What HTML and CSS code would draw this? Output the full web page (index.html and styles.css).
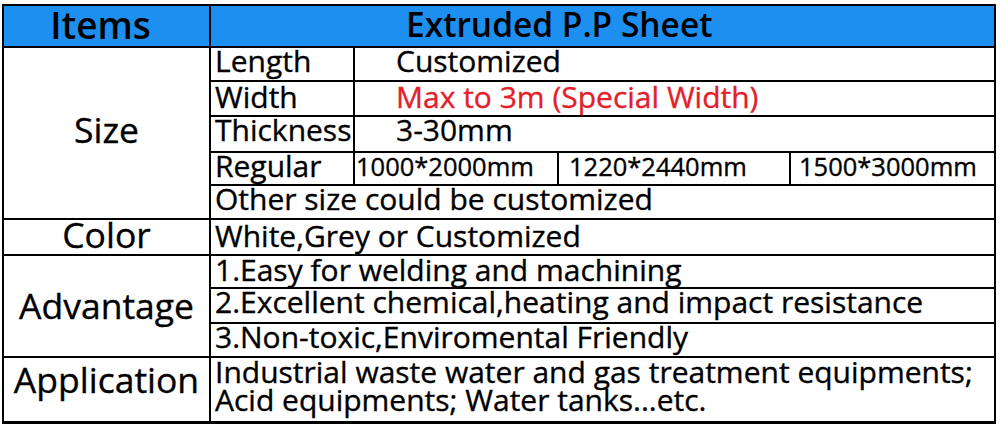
FILE: index.html
```html
<!DOCTYPE html>
<html lang="en">
<head>
<meta charset="utf-8">
<title>Extruded P.P Sheet</title>
<link rel="stylesheet" href="styles.css">
</head>
<body>
<div class="spec">
  <div class="cell head head-items">Items</div>
  <div class="cell head head-title span4">Extruded P.P Sheet</div>

  <div class="cell group group-size rows5">Size</div>
  <div class="cell label">Length</div>
  <div class="cell value span3">Customized</div>
  <div class="cell label drop2">Width</div>
  <div class="cell value span3 red drop2">Max to 3m (Special Width)</div>
  <div class="cell label">Thickness</div>
  <div class="cell value span3">3-30mm</div>
  <div class="cell label">Regular</div>
  <div class="cell size size-a">1000*2000mm</div>
  <div class="cell size size-b">1220*2440mm</div>
  <div class="cell size size-c">1500*3000mm</div>
  <div class="cell text span4">Other size could be customized</div>

  <div class="cell group group-color">Color</div>
  <div class="cell text span4 drop3">White,Grey or Customized</div>

  <div class="cell group rows3">Advantage</div>
  <div class="cell text span4 drop1">1.Easy for welding and machining</div>
  <div class="cell text span4">2.Excellent chemical,heating and impact resistance</div>
  <div class="cell text span4">3.Non-toxic,Enviromental Friendly</div>

  <div class="cell group group-app">Application</div>
  <div class="cell text span4 multi">Industrial waste water and gas treatment equipments;<br>Acid equipments; Water tanks...etc.</div>
</div>
</body>
</html>
```

FILE: styles.css
```css
html, body {
  margin: 0;
  background: #ffffff;
}

body {
  padding: 4px 0 0 2px;
  font-family: "Open Sans", "DejaVu Sans", sans-serif;
  color: #000000;
}

.spec {
  display: grid;
  width: fit-content;
  grid-template-columns: 205px 142px 202px 230px 203px;
  grid-template-rows: 40px 32px 33px 34px 31px 32px 34px 31px 33px 32px 63px;
  gap: 2px;
  padding: 2px 2px 3px 2px;
  background: #000000;
}

.cell {
  background: #ffffff;
  display: flex;
  align-items: flex-start;
  font-size: 30px;
  line-height: 26px;
  white-space: nowrap;
  -webkit-text-stroke: 0.35px currentColor;
}

.span3 { grid-column: span 3; }
.span4 { grid-column: span 4; }
.rows5 { grid-row: span 5; }
.rows3 { grid-row: span 3; }

.drop1 { padding-top: 1px; }
.drop2 { padding-top: 2px; }
.drop3 { padding-top: 3px; }

.head {
  background: #1c8ff0;
  font-weight: 600;
  align-items: center;
  line-height: 1;
  -webkit-text-stroke: 0;
}

.head-items {
  justify-content: center;
  font-size: 37px;
  padding: 0 12px 4px 0;
}

.head-title {
  font-size: 33.5px;
  padding: 0 0 2px 195px;
}

.group {
  justify-content: center;
  align-items: center;
  font-size: 35.5px;
  line-height: 1;
}

.group-size { padding-bottom: 7px; }
.group-color { padding-bottom: 5px; }
.group-app { padding-bottom: 20px; }

.label {
  padding-left: 4px;
}

.value {
  padding-left: 41px;
}

.red {
  color: #e3202b;
}

.text {
  padding-left: 4px;
}

.size {
  font-size: 25.5px;
}

.size-a { padding-left: 1px; }
.size-b { padding-left: 10px; }
.size-c { padding-left: 8px; }

.multi {
  line-height: 28px;
  padding-top: 0;
}
```
